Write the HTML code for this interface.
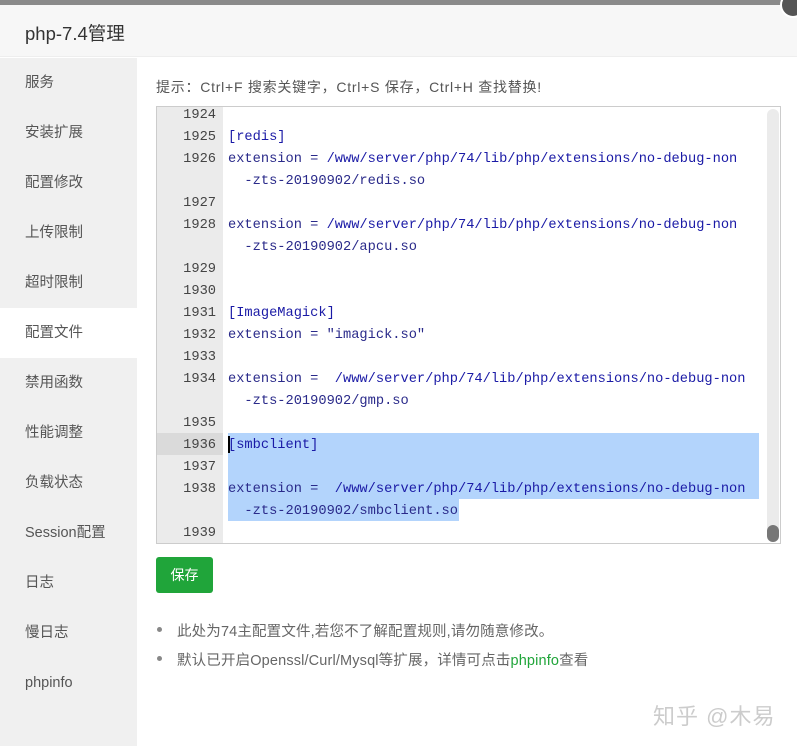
<!DOCTYPE html>
<html><head><meta charset="utf-8"><style>
*{margin:0;padding:0;box-sizing:border-box}
body{width:797px;height:746px;overflow:hidden;background:#fff;font-family:"Liberation Sans","Microsoft YaHei","Noto Sans CJK SC",sans-serif;position:relative}
.top{position:absolute;left:0;top:0;width:797px;height:5px;background:#8a8a8a}
.hdr{position:absolute;left:0;top:5px;width:797px;height:52px;background:#f7f7f7;border-bottom:1px solid #eee}
.hdr span{position:absolute;left:25px;top:15px;font-size:18.5px;color:#333}
.close{position:absolute;left:780px;top:-8px;width:26px;height:26px;border-radius:50%;background:#555;border:2px solid #fff}
.side{position:absolute;left:0;top:58px;width:137px;height:688px;background:#f0f0f0}
.side div{height:50px;line-height:50px;padding-left:25px;font-size:14.5px;color:#555}
.side .on{background:#fff}
.tip{position:absolute;left:156px;top:77px;font-size:14px;letter-spacing:0.75px;color:#555}
.ed{position:absolute;left:156px;top:106px;width:625px;height:438px;border:1px solid #ccc;overflow:hidden;background:#fff}
.gut{position:absolute;left:0;top:0;width:66px;height:438px;background:#ebebeb}
.rows{position:absolute;left:0;top:-2px;width:100%}
.r{height:22px;line-height:22px;font-family:"Liberation Mono",monospace;font-size:13.7px;color:#333;position:relative;white-space:pre}
.n{position:absolute;left:0;width:59px;text-align:right;color:#444}
.c{position:absolute;left:71px;color:#1a1aa6}
.b{color:#2a2a8a}
.hl{position:absolute;background:#b3d4fc}
.sb{position:absolute;left:610px;top:2px;width:12px;height:432px;background:#ebebeb;border-radius:6px}
.th{position:absolute;left:610px;top:418px;width:12px;height:17px;background:#777;border-radius:6px}
.btn{position:absolute;left:156px;top:557px;width:57px;height:36px;background:#20a53a;border-radius:3px;color:#fff;font-size:14px;line-height:36px;text-align:center}
.nt{position:absolute;left:177px;font-size:14.5px;letter-spacing:0.15px;color:#666}
.dot{position:absolute;left:157px;width:5px;height:5px;border-radius:50%;background:#888}
.wm{position:absolute;left:653px;top:699px;font-size:22px;letter-spacing:1px;color:#ccc}
</style></head><body>
<div class="top"></div>
<div class="hdr"><span>php-7.4管理</span></div>
<div class="close"></div>
<div class="side">
<div>服务</div><div>安装扩展</div><div>配置修改</div><div>上传限制</div><div>超时限制</div><div class="on">配置文件</div><div>禁用函数</div><div>性能调整</div><div>负载状态</div><div>Session配置</div><div>日志</div><div>慢日志</div><div>phpinfo</div>
</div>
<div class="tip">提示：Ctrl+F 搜索关键字，Ctrl+S 保存，Ctrl+H 查找替换!</div>
<div class="ed">
<div class="gut"></div>
<div style="position:absolute;left:0;top:326px;width:66px;height:22px;background:#dadada"></div>
<div class="hl" style="left:71px;top:326px;width:531px;height:66px"></div>
<div class="hl" style="left:71px;top:392px;width:231px;height:22px"></div>
<div style="position:absolute;left:71px;top:329px;width:2px;height:17px;background:#000"></div>
<div class="rows">
<div class="r"><span class="n">1924</span></div>
<div class="r"><span class="n">1925</span><span class="c">[redis]</span></div>
<div class="r"><span class="n">1926</span><span class="c"><span class="b">extension = </span>/www/server/php/74/lib/php/extensions/no-debug-non</span></div>
<div class="r"><span class="c b">  -zts-20190902/redis.so</span></div>
<div class="r"><span class="n">1927</span></div>
<div class="r"><span class="n">1928</span><span class="c"><span class="b">extension = </span>/www/server/php/74/lib/php/extensions/no-debug-non</span></div>
<div class="r"><span class="c b">  -zts-20190902/apcu.so</span></div>
<div class="r"><span class="n">1929</span></div>
<div class="r"><span class="n">1930</span></div>
<div class="r"><span class="n">1931</span><span class="c">[ImageMagick]</span></div>
<div class="r"><span class="n">1932</span><span class="c b">extension = "imagick.so"</span></div>
<div class="r"><span class="n">1933</span></div>
<div class="r"><span class="n">1934</span><span class="c"><span class="b">extension =  </span>/www/server/php/74/lib/php/extensions/no-debug-non</span></div>
<div class="r"><span class="c b">  -zts-20190902/gmp.so</span></div>
<div class="r"><span class="n">1935</span></div>
<div class="r"><span class="n">1936</span><span class="c">[smbclient]</span></div>
<div class="r"><span class="n">1937</span></div>
<div class="r"><span class="n">1938</span><span class="c"><span class="b">extension =  </span>/www/server/php/74/lib/php/extensions/no-debug-non</span></div>
<div class="r"><span class="c b">  -zts-20190902/smbclient.so</span></div>
<div class="r"><span class="n">1939</span></div>
</div>
<div class="sb"></div><div class="th"></div>
</div>
<div class="btn">保存</div>
<div class="dot" style="top:627px"></div>
<div class="nt" style="top:620px">此处为74主配置文件,若您不了解配置规则,请勿随意修改。</div>
<div class="dot" style="top:656px"></div>
<div class="nt" style="top:649px">默认已开启Openssl/Curl/Mysql等扩展，详情可点击<span style="color:#20a53a">phpinfo</span>查看</div>
<div class="wm">知乎 @木易</div>
</body></html>
